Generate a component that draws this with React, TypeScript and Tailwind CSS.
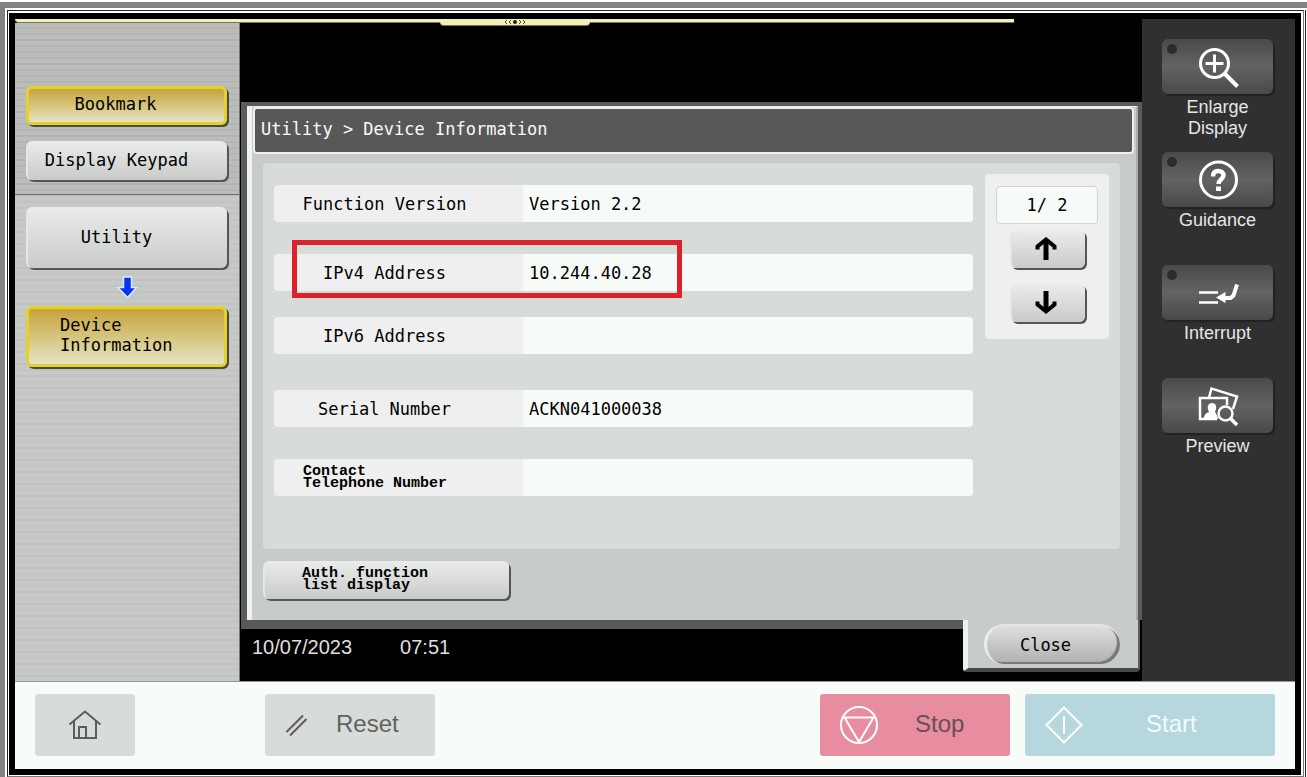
import type { ReactNode } from "react";

const mono = "font-['DejaVu_Sans_Mono',monospace] text-[17px] leading-5";
const raised =
  "rounded-md border-t-2 border-l-2 border-t-[#e9ecea] border-l-[#e4e7e5] bg-gradient-to-b from-[#e8ebe9] to-[#c9cbc9] text-black shadow-[2px_2px_0_#555756]";
const selected =
  "rounded-md border-[3px] border-[#e8d02c] bg-gradient-to-b from-[#c6a43a] via-[#d6c47c] to-[#e6e3c3] text-black shadow-[2px_2px_0_#4c4b40]";

function SideButton({ active, tall, children }: { active?: boolean; tall?: boolean; children: ReactNode }) {
  return (
    <button
      type="button"
      className={`flex w-full items-center justify-center pr-[22px] pb-1 ${mono} ${tall ? "h-[61px]" : "h-[39px]"} ${active ? selected : raised}`}
    >
      {children}
    </button>
  );
}

function Sidebar() {
  return (
    <aside className="flex w-[225px] shrink-0 flex-col border-r border-[#777977] bg-[repeating-linear-gradient(to_bottom,#c6c9c6_0px,#c6c9c6_4px,#c0c3c0_4px,#c0c3c0_6px)]">
      <div className="flex h-[172px] flex-col gap-4 border-b border-[#6b6d6b] bg-[repeating-linear-gradient(to_bottom,#bbbdbb_0px,#bbbdbb_4px,#b3b5b3_4px,#b3b5b3_6px)] pt-[63px] pr-3 pl-[11px]">
        <SideButton active>Bookmark</SideButton>
        <SideButton>Display Keypad</SideButton>
      </div>
      <div className="flex flex-col items-center pt-3 pr-3 pl-[11px]">
        <SideButton tall>Utility</SideButton>
        <svg className="my-2 h-[22px] w-[22px]" viewBox="0 0 22 22" aria-hidden="true">
          <path d="M7.500 1h8v10.500h5L11.500 21.500 2 11.500h5.500z" fill="#0636ef" stroke="#dfe5f8" strokeWidth="1.500" />
        </svg>
        <button type="button" className={`h-[61px] w-full pb-1 pl-[31px] text-left ${mono} ${selected}`}>
          Device
          <br />
          Information
        </button>
      </div>
    </aside>
  );
}

interface Row {
  label: ReactNode;
  value: string;
  spacing: string;
  marked?: boolean;
  small?: boolean;
}

const small = "font-['Liberation_Mono',monospace] text-[15px] leading-3 font-bold";

const rows: Row[] = [
  { label: "Function Version", value: "Version 2.2", spacing: "mt-0" },
  { label: "IPv4 Address", value: "10.244.40.28", spacing: "mt-8", marked: true },
  { label: "IPv6 Address", value: "", spacing: "mt-[26px]" },
  { label: "Serial Number", value: "ACKN041000038", spacing: "mt-9" },
  {
    label: (
      <>
        Contact
        <br />
        Telephone Number
      </>
    ),
    value: "",
    spacing: "mt-8",
    small: true,
  },
];

function InfoList() {
  return (
    <dl className="min-w-0 flex-1 pt-[11px]">
      {rows.map((row, i) => (
        <div key={i} className={`relative flex h-[37px] ${row.spacing}`}>
          <dt
            className={`flex w-[249px] shrink-0 items-center rounded-l bg-[#efefef] text-black ${row.small ? `pl-[29px] ${small}` : `justify-center pr-[28px] ${mono}`}`}
          >
            <span>{row.label}</span>
          </dt>
          <dd className={`flex flex-1 items-center rounded-r bg-[#f7fbf8] pl-[6px] text-black ${mono}`}>{row.value}</dd>
          {row.marked && (
            <span className="pointer-events-none absolute -top-[14px] left-[18px] h-[58px] w-[390px] border-[5px] border-[#dc222a]" />
          )}
        </div>
      ))}
    </dl>
  );
}

function PageButton({ down }: { down?: boolean }) {
  return (
    <button
      type="button"
      aria-label={down ? "Next page" : "Previous page"}
      className={`flex h-[38px] w-[75px] items-center justify-center pr-1 pb-[2px] ${raised}`}
    >
      <svg className="h-6 w-6" viewBox="0 0 24 24" fill="none" stroke="#000" aria-hidden="true">
        {down ? (
          <>
            <path d="M12 0v20" strokeWidth="5" />
            <path d="M3.500 10.500v3L12 20.500l8.500-7v-3" strokeWidth="4" />
          </>
        ) : (
          <>
            <path d="M12 23V3" strokeWidth="5" />
            <path d="M3.500 12.500v-3L12 2.500l8.500 7v3" strokeWidth="4" />
          </>
        )}
      </svg>
    </button>
  );
}

function DeviceWindow() {
  return (
    <section className="flex flex-1 flex-col">
      <div className="flex-1 border-t-4 border-r-4 border-l-[6px] border-[#5a5b5a] bg-[#c8ccc8]">
        <div className="h-full border-t border-r-2 border-l-[5px] border-t-[#e9edea] border-r-[#a9acaa] border-l-[#eff3f0] pr-[2px] pl-px">
          <h1
            className={`flex h-[47px] items-center rounded border-2 border-[#eef0ee] bg-[#585858] pb-[3px] pl-[6px] text-[#f8faf8] ${mono}`}
          >
            Utility &gt; Device Information
          </h1>
          <div className="mt-[9px] mr-[14px] ml-[10px] flex min-h-[386px] items-start gap-3 rounded bg-[#d8dcd8] pt-[11px] pr-[11px] pl-[11px]">
            <InfoList />
            <div className="flex h-[165px] w-[124px] flex-col items-center rounded bg-[#efefef] pt-3">
              <output
                className={`mb-[6px] flex h-[38px] w-[102px] items-center justify-center rounded-sm border border-[#d2d5d2] bg-[#f7fbf8] text-black ${mono}`}
              >
                1/ 2
              </output>
              <div className="flex flex-col gap-4">
                <PageButton />
                <PageButton down />
              </div>
            </div>
          </div>
          <button type="button" className={`mt-3 ml-[10px] h-[38px] w-[246px] pb-[2px] pl-[37px] text-left ${small} ${raised}`}>
            Auth. function
            <br />
            list display
          </button>
        </div>
      </div>
      <div className="flex h-[61px]">
        <div className="flex flex-1 gap-12 border-t-[9px] border-[#575857] pt-[6px] pl-[11px] font-['Liberation_Sans',sans-serif] text-[20px] leading-6 text-[#dedede]">
          <span>10/07/2023</span>
          <time>07:51</time>
        </div>
        <div className="mr-[2px] h-[52px] w-[177px] rounded-b border-r-2 border-b-4 border-l-[5px] border-r-[#5a5b5a] border-b-[#464746] border-l-[#eff3f0] bg-[#c8ccc8] pt-1 pl-4">
          <button
            type="button"
            className={`h-10 w-[136px] rounded-full border-t-2 border-l-[3px] border-t-[#e4e6e4] border-l-[#eceeec] bg-gradient-to-b from-[#dedfde] to-[#aeb1af] pr-4 text-black shadow-[inset_-3px_-2px_1px_#777977] ${mono}`}
          >
            Close
          </button>
        </div>
      </div>
    </section>
  );
}

function HardKey({ label, led = true, children }: { label: ReactNode; led?: boolean; children: ReactNode }) {
  return (
    <div className="h-[113px]">
      <button type="button" className="flex w-full flex-col items-center gap-[3px]">
        <span className="relative flex h-[55px] w-[111px] items-center justify-center rounded-md bg-gradient-to-b from-[#494b49] via-[#626462] to-[#484a48] shadow-[2px_2px_1px_#212221]">
          {led && <i className="absolute top-[5px] left-[5px] h-[10px] w-[10px] rounded-full bg-[#2b2c2b]" />}
          <svg
            className="h-12 w-12"
            viewBox="0 0 48 48"
            fill="none"
            stroke="#fff"
            strokeWidth="3"
            aria-hidden="true"
          >
            {children}
          </svg>
        </span>
        <span className="text-center text-[18px] leading-[21px] text-[#e6e6e6]">{label}</span>
      </button>
    </div>
  );
}

function HardKeys() {
  return (
    <aside className="w-[153px] shrink-0 bg-[#303030] pt-5 pr-[22px] pl-5 font-['Liberation_Sans',sans-serif]">
      <HardKey
        label={
          <>
            Enlarge
            <br />
            Display
          </>
        }
      >
        <circle cx="20.500" cy="20.500" r="14" />
        <path d="M20.500 11.500v18M11.500 20.500h18" />
        <path d="M30.500 30.500 43.500 43.500" strokeWidth="4" />
      </HardKey>
      <HardKey label="Guidance">
        <circle cx="24.500" cy="24" r="18" />
        <path
          d="M19 20.500c0-4 2.300-5.500 5.300-5.500 3.200 0 5.200 1.700 5.200 4.300 0 4-5 4.200-5 8.700"
          strokeWidth="4.500"
        />
        <path d="M24.500 30.500v4.500" strokeWidth="5" />
      </HardKey>
      <HardKey label="Interrupt">
        <path d="M5 23.500h19M5 33.500h19" strokeWidth="2.500" />
        <path d="M43 15.500 39.500 26.500 36.500 29H29" strokeWidth="4" />
        <path d="M22 28.500 31.500 23v11z" fill="#fff" stroke="none" />
      </HardKey>
      <HardKey label="Preview" led={false}>
        <path d="M15 15.500 17.500 6.500 43 14.500 39 27" strokeWidth="2.500" />
        <path d="M23 37H6V16h27V23" strokeWidth="2.500" />
        <path
          d="M9.500 37c1-5 3-6 5.500-7-2.500-5-1-9 3-9s5.500 4 3 9c1 1 2 4 3.500 7z"
          fill="#fff"
          stroke="none"
        />
        <circle cx="31.500" cy="31.500" r="7" strokeWidth="2.500" />
        <path d="m36.500 36.500 6.500 6.500" strokeWidth="3.500" />
      </HardKey>
    </aside>
  );
}

const bottomKey = "flex h-[62px] items-center rounded-[3px]";

function BottomBar() {
  return (
    <footer className="flex h-[88px] shrink-0 border-t border-[#969896] bg-[#f8fcf8] px-5 pt-3 font-['Liberation_Sans',sans-serif] text-[24px] leading-7">
      <button type="button" aria-label="Home" className={`w-[100px] justify-center bg-[#d8dcd8] ${bottomKey}`}>
        <svg
          className="h-9 w-9"
          viewBox="0 0 36 36"
          fill="none"
          stroke="#5b5d5b"
          strokeWidth="2"
          aria-hidden="true"
        >
          <path d="M2.500 17.500 18 4.500 33.500 17.500M7 14v17h22V14" />
          <path d="M12 30.500V20h7v10.500" />
        </svg>
      </button>
      <button type="button" className={`ml-[130px] w-[170px] bg-[#d8dcd8] pl-5 text-[#616361] ${bottomKey}`}>
        <svg
          className="mr-7 h-6 w-[23px]"
          viewBox="0 0 23 24"
          fill="none"
          stroke="#5b5d5b"
          strokeWidth="2"
          aria-hidden="true"
        >
          <path d="M1.500 19 18 2.500M5 22.500 21.500 6" />
        </svg>
        <span className="pb-[2px]">Reset</span>
      </button>
      <button type="button" className={`ml-auto w-[190px] bg-[#e78d9f] pl-5 text-[#655055] ${bottomKey}`}>
        <svg
          className="mr-[37px] h-[38px] w-[38px]"
          viewBox="0 0 38 38"
          fill="none"
          stroke="#fff"
          strokeWidth="2"
          aria-hidden="true"
        >
          <circle cx="19" cy="19" r="18" />
          <path d="M4.500 11.500h29L19 36z" />
        </svg>
        <span className="pb-[2px]">Stop</span>
      </button>
      <button type="button" className={`ml-[15px] w-[250px] bg-[#b6d7dd] pl-5 text-[#f3fafa] ${bottomKey}`}>
        <svg
          className="mr-[63px] h-[38px] w-[38px]"
          viewBox="0 0 38 38"
          fill="none"
          stroke="#fff"
          strokeWidth="2"
          aria-hidden="true"
        >
          <path d="M19 1.500 36.500 19 19 36.500 1.500 19zM19 10v18" />
        </svg>
        <span className="pb-[2px]">Start</span>
      </button>
    </footer>
  );
}

export default function App() {
  return (
    <div className="flex min-h-screen flex-col bg-white pt-[2px]">
      <div className="flex flex-1 border-t-[6px] border-l-[5px] border-[#828282] bg-white">
        <div className="flex flex-1 gap-px pt-[2px] pr-px pl-[2px]">
          <div className="flex flex-1 border border-t-[#222] border-r-[#777] border-b-[#777] border-l-[#222] pt-[2px] pr-[2px] pb-px pl-px">
            <div className="flex flex-1 flex-col bg-black p-[6px]">
              <div className="flex flex-1">
                <div className="flex min-w-0 flex-1 flex-col">
                  <div className="relative mr-32 h-1 rounded-bl border-b border-[#77765a] bg-[#f5f1b4]">
                    <div className="absolute top-0 left-[425px] z-10 flex h-[7px] w-[150px] items-center justify-center rounded-b-sm border-b border-[#77765a] bg-[#f5f1b4]">
                      <svg className="h-[6px] w-6" viewBox="0 0 24 6" fill="none" stroke="#4c4b32" aria-hidden="true">
                        <path d="M4 1 2 3l2 2M8 1 6 3l2 2M16 1l2 2-2 2M20 1l2 2-2 2" />
                        <circle cx="12" cy="3" r="2" fill="#222" stroke="none" />
                      </svg>
                    </div>
                  </div>
                  <div className="flex flex-1">
                    <Sidebar />
                    <main className="flex min-w-0 flex-1 flex-col bg-black pt-[79px] pl-px">
                      <DeviceWindow />
                    </main>
                  </div>
                </div>
                <HardKeys />
              </div>
              <BottomBar />
            </div>
          </div>
          <div className="w-px bg-[#222]" />
        </div>
      </div>
    </div>
  );
}
